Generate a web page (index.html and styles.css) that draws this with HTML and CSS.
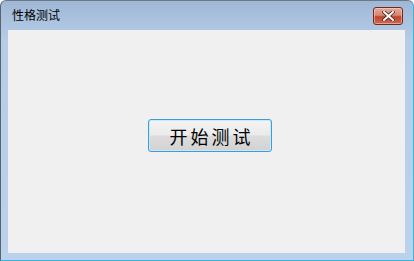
FILE: index.html
```html
<!DOCTYPE html>
<html lang="zh-CN">
<head>
    <meta charset="UTF-8">
    <title>性格测试</title>
    <link rel="stylesheet" href="styles.css">
</head>
<body>
    <div class="window">
        <div class="titlebar">
            <span class="title">性格测试</span>
            <button class="close-btn" title="关闭">
                <svg width="13" height="10" viewBox="0 0 13 10">
                    <path d="M2 1 L11 9 M11 1 L2 9" stroke="#4a2a24" stroke-width="3.6" stroke-linecap="square"/>
                    <path d="M2 1 L11 9 M11 1 L2 9" stroke="#ffffff" stroke-width="2" stroke-linecap="square"/>
                </svg>
            </button>
        </div>
        <div class="client">
            <button class="start-btn">开始测试</button>
        </div>
    </div>
</body>
</html>
```

FILE: styles.css
```css
* {
    margin: 0;
    padding: 0;
    box-sizing: border-box;
}

body {
    width: 414px;
    height: 261px;
    font-family: "Noto Sans CJK SC", "Noto Sans", sans-serif;
    background-color: #fff;
    overflow: hidden;
}

.window {
    width: 414px;
    height: 261px;
    display: flex;
    flex-direction: column;
    background: linear-gradient(to bottom, #9fb8d6 0px, #b6cde7 40px, #bad2eb 100%);
    border-left: 1px solid #5a6470;
    border-top: 1px solid #6c7886;
    border-right: 1px solid #35b4dd;
    border-bottom: 1px solid #35b4dd;
    border-radius: 6px 6px 0 0;
}

.titlebar {
    height: 29px;
    display: flex;
    align-items: center;
    justify-content: space-between;
    padding: 0 10px 1px 11px;
}

.title {
    font-size: 12px;
    color: #000;
    line-height: 14px;
}

.close-btn {
    width: 30px;
    height: 18px;
    margin-top: 2px;
    border: 1px solid #6e2a22;
    border-radius: 3px;
    background: linear-gradient(to bottom, #e6a89a 0%, #d98672 45%, #c0432c 55%, #cf6a4e 100%);
    box-shadow: inset 0 0 0 1px rgba(255, 220, 210, 0.5);
    display: flex;
    align-items: center;
    justify-content: center;
}

.client {
    flex: 1;
    margin: 0 8px 7px 7px;
    background-color: #f0f0f0;
    padding: 89px 0 0 140px;
}

.start-btn {
    width: 124px;
    height: 33px;
    border: 1px solid #3c9dd7;
    border-radius: 3px;
    background: linear-gradient(to bottom, #f4f4f4 0%, #ebebeb 48%, #dcdcdc 52%, #d2d2d2 100%);
    box-shadow: inset 0 0 0 1px #c8eafa;
    font-family: "Noto Sans CJK SC", sans-serif;
    font-size: 18px;
    letter-spacing: 3px;
    padding-left: 3px;
    color: #000;
    line-height: 30px;
}
```
